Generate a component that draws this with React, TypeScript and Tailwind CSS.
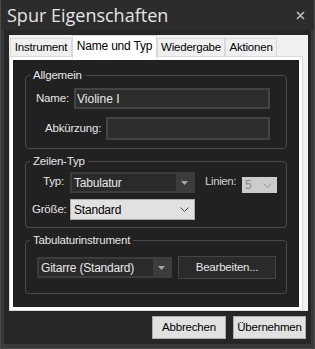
import React from 'react';

const ui = { fontFamily: '"Liberation Sans", Arial, sans-serif' };

function DarkCombo({ value, width }: { value: string; width: string }) {
  return (
    <div className={`flex h-[21px] shrink-0 ${width} border-2 border-[#3c3c3c] bg-[#3c3c3c]`}>
      <div className="flex flex-1 items-center whitespace-nowrap bg-[#2a2a2a] pl-[2px] text-[12px] tracking-[-0.2px] text-[#e8e8e8]">
        {value}
      </div>
      <div className="flex w-[17px] items-center justify-center">
        <svg width="7" height="4" viewBox="0 0 7 4">
          <path d="M0 0h7L3.5 4z" fill="#a8a8a8" />
        </svg>
      </div>
    </div>
  );
}

function Chevron({ color }: { color: string }) {
  return (
    <svg width="9" height="5" viewBox="0 0 9 5">
      <path d="M0.5 0.5L4.5 4.5L8.5 0.5" fill="none" stroke={color} strokeWidth="1" />
    </svg>
  );
}

function Label({ text, className }: { text: string; className: string }) {
  return <span className={`shrink-0 whitespace-nowrap text-[11.5px] tracking-[-0.2px] ${className}`}>{text}</span>;
}

function Group({ title, children, className }: { title: string; children: React.ReactNode; className?: string }) {
  return (
    <fieldset className={`rounded-[4px] border border-[#4a4a4a] ${className ?? ''}`}>
      <legend className="ml-[4px] whitespace-nowrap px-[3px] text-[11.5px] leading-[14px] tracking-[-0.2px] text-[#e6e6e6]">
        {title}
      </legend>
      {children}
    </fieldset>
  );
}

export default function App() {
  const tabs = [
    { t: 'Instrument', w: 'w-[62px]' },
    { t: 'Name und Typ', w: 'w-[85px]' },
    { t: 'Wiedergabe', w: 'w-[68px]' },
    { t: 'Aktionen', w: 'w-[52px]' },
  ];
  return (
    <div className="flex h-[349px] w-[315px] flex-col bg-[#4a4a4a] px-[1px] pb-[1px]" style={ui}>
      <div className="flex h-[30px] items-center justify-between bg-[#2c2c2c] pl-[6px] pr-[9px]">
        <span className="text-[18px] leading-none text-[#e4e4e4]" style={{ fontFamily: '"Open Sans", "Noto Sans", sans-serif' }}>
          Spur Eigenschaften
        </span>
        <svg width="9" height="9" viewBox="0 0 9 9">
          <path d="M1 1L8 8M8 1L1 8" stroke="#bdbdbd" strokeWidth="1.6" />
        </svg>
      </div>
      <div className="flex flex-1 flex-col border-x-[3px] border-b-[4px] border-[#3a3a3a] bg-[#262626] pl-[5px] pr-[3px] pt-[5px]">
        <div className="flex h-[276px] flex-col bg-[#f0f0f0] pl-[1px] pr-[6px]">
          <div className="flex h-[22px] items-end">
            {tabs.map(({ t, w }, i) =>
              i === 1 ? (
                <div
                  key={t}
                  className={`relative z-10 -mb-[1px] flex h-[23px] ${w} shrink-0 items-center justify-center whitespace-nowrap border-x border-t border-[#d9d9d9] bg-white pb-[2px] text-[12px] tracking-[-0.2px] text-black`}
                >
                  {t}
                </div>
              ) : (
                <div
                  key={t}
                  className={`flex h-[19px] ${w} shrink-0 items-center justify-center whitespace-nowrap border-x border-t border-[#d9d9d9] bg-[#f0f0f0] text-[11.5px] tracking-[-0.2px] text-black`}
                >
                  {t}
                </div>
              ),
            )}
          </div>
          <div className="flex h-[253px] flex-col border-[3px] border-white bg-[#212121] px-[12px] pt-[8px] outline outline-1 outline-[#d9d9d9]">
            <Group title="Allgemein" className="pb-[8px] pt-[6px]">
              <div className="flex items-center">
                <Label text="Name:" className="ml-[10px] w-[38px] text-[#e6e6e6]" />
                <div className="flex h-[21px] w-[196px] items-center border-2 border-[#444] bg-[#2d2d2d] pl-[1px] text-[12px] text-[#e8e8e8]">
                  Violine I
                </div>
              </div>
              <div className="mt-[8px] flex items-center">
                <Label text="Abkürzung:" className="ml-[19px] w-[61px] text-[#e6e6e6]" />
                <div className="h-[23px] w-[164px] border-2 border-[#444] bg-[#2d2d2d]" />
              </div>
            </Group>
            <Group title="Zeilen-Typ" className="mt-[5px] pb-[7px] pt-[4px]">
              <div className="flex items-end">
                <Label text="Typ:" className="mb-[3px] ml-[17px] w-[27px] text-[#e6e6e6]" />
                <DarkCombo value="Tabulatur" width="w-[125px]" />
                <Label text="Linien:" className="mb-[3px] ml-[10px] w-[37px] tracking-[-0.4px] text-[#d0d0d0]" />
                <div className="flex h-[16px] w-[35px] shrink-0 items-center justify-between bg-[#cccccc] pl-[3px] pr-[5px] text-[12px] leading-none text-[#8c8c8c]">
                  5
                  <Chevron color="#9a9a9a" />
                </div>
              </div>
              <div className="mt-[6px] flex items-center">
                <Label text="Größe:" className="ml-[6px] w-[38px] text-[#e6e6e6]" />
                <div className="flex h-[21px] w-[125px] shrink-0 items-center justify-between border border-[#adadad] bg-[#e1e1e1] pl-[3px] pr-[5px] text-[12px] tracking-[-0.2px] text-black">
                  Standard
                  <Chevron color="#444" />
                </div>
              </div>
            </Group>
            <Group title="Tabulaturinstrument" className="mt-[5px] pb-[14px] pt-[9px]">
              <div className="flex items-center">
                <div className="ml-[11px]">
                  <DarkCombo value="Gitarre (Standard)" width="w-[135px]" />
                </div>
                <div className="ml-[6px] flex h-[23px] w-[98px] items-center justify-center border border-[#444] bg-[#2a2a2a] text-[11.5px] tracking-[-0.2px] text-[#e6e6e6]">
                  Bearbeiten...
                </div>
              </div>
            </Group>
          </div>
        </div>
        <div className="mt-[5px] flex justify-end gap-[7px] pr-[2px]">
          <div className="flex h-[23px] w-[74px] items-center justify-center border border-[#adadad] bg-[#e1e1e1] text-[11.5px] tracking-[-0.2px] text-black">
            Abbrechen
          </div>
          <div className="flex h-[23px] w-[73px] items-center justify-center border border-[#adadad] bg-[#e1e1e1] text-[11.5px] tracking-[-0.2px] text-black">
            Übernehmen
          </div>
        </div>
      </div>
    </div>
  );
}
